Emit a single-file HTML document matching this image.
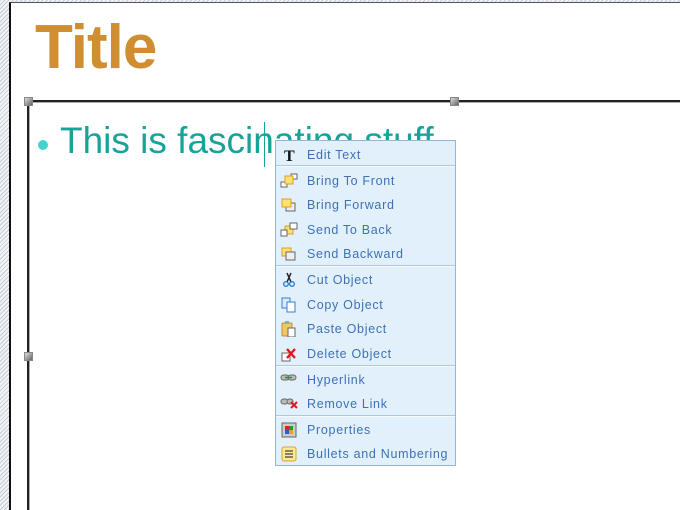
<!DOCTYPE html>
<html><head><meta charset="utf-8"><style>
*{margin:0;padding:0;box-sizing:border-box}
html,body{width:680px;height:510px;overflow:hidden}
body{background:#fff;position:relative;font-family:"Liberation Sans",Arial,sans-serif}
.hatch{position:absolute;background:repeating-linear-gradient(135deg,#c4ccd6 0 1px,#f2f4f7 1px 3px)}
.page{position:absolute;left:9px;top:2px;width:671px;height:508px;background:#fff;border-left:2px solid #111;border-top:1px solid #555}
.title{position:absolute;left:35px;top:12px;font-size:62px;font-weight:bold;color:#d08e30;letter-spacing:-1px}
.box{position:absolute;left:27px;top:100px;width:653px;height:410px;border-top:2px solid #222;border-left:2px solid #222;box-shadow:inset 1px 1px 0 #aaa}
.h{position:absolute;width:9px;height:9px;background:linear-gradient(135deg,#ddd,#666);border:1px solid #888}
.bul{position:absolute;left:38px;top:140px;width:10px;height:10px;border-radius:50%;background:#45d3d0}
.txt{position:absolute;left:60px;top:120px;font-size:37px;color:#18a39a;white-space:nowrap}
.caret{position:absolute;left:264px;top:122px;width:1px;height:45px;background:#18a39a}
.menu{position:absolute;left:275px;top:140px;width:181px;height:326px;background:#e2f0fc;border:1px solid #96b6d4}
.it{position:absolute;left:31px;font-size:12.5px;color:#3d72b5;line-height:14px;letter-spacing:0.7px;white-space:nowrap}
.sep{position:absolute;left:0;width:179px;height:2px;background:#b0c8de;border-bottom:1px solid #f4faff}
.ic{position:absolute;left:4px;width:18px;height:16px}
</style></head><body>
<div class="hatch" style="left:0;top:0;width:9px;height:510px"></div>
<div class="hatch" style="left:0;top:0;width:680px;height:2px"></div>
<div class="page"></div>
<div class="title">Title</div>
<div class="box"></div>
<div class="h" style="left:24px;top:97px"></div>
<div class="h" style="left:450px;top:97px"></div>
<div class="h" style="left:24px;top:352px"></div>
<div class="bul"></div>
<div class="txt">This is fascinating stuff.</div>
<div class="caret"></div>
<div class="menu">
<div class="sep" style="top:24px"></div>
<div class="sep" style="top:124px"></div>
<div class="sep" style="top:224px"></div>
<div class="sep" style="top:274px"></div>
<div class="it" style="top:7px">Edit Text</div>
<div class="it" style="top:33px">Bring To Front</div>
<div class="it" style="top:57px">Bring Forward</div>
<div class="it" style="top:82px">Send To Back</div>
<div class="it" style="top:106px">Send Backward</div>
<div class="it" style="top:132px">Cut Object</div>
<div class="it" style="top:157px">Copy Object</div>
<div class="it" style="top:181px">Paste Object</div>
<div class="it" style="top:206px">Delete Object</div>
<div class="it" style="top:232px">Hyperlink</div>
<div class="it" style="top:256px">Remove Link</div>
<div class="it" style="top:282px">Properties</div>
<div class="it" style="top:306px">Bullets and Numbering</div>
<svg class="ic" style="top:6px" viewBox="0 0 18 16"><text x="4" y="14" font-family="Liberation Serif" font-weight="bold" font-size="16" fill="#111">T</text></svg>
<svg class="ic" style="top:32px" viewBox="0 0 18 16"><rect x="11" y="1" width="6" height="5" fill="#fff" stroke="#666"/><rect x="1" y="9" width="6" height="5" fill="#fff" stroke="#666"/><rect x="5" y="3" width="8" height="8" fill="#fce070" stroke="#e0a020"/></svg>
<svg class="ic" style="top:56px" viewBox="0 0 18 16"><rect x="6" y="6" width="9" height="8" fill="#eee" stroke="#666"/><rect x="2" y="2" width="9" height="8" fill="#fce070" stroke="#e0a020"/></svg>
<svg class="ic" style="top:81px" viewBox="0 0 18 16"><rect x="5" y="4" width="8" height="8" fill="#fce070" stroke="#e0a020"/><rect x="10" y="1" width="7" height="6" fill="#fff" stroke="#666"/><rect x="1" y="8" width="6" height="6" fill="#fff" stroke="#666"/></svg>
<svg class="ic" style="top:105px" viewBox="0 0 18 16"><rect x="2" y="2" width="9" height="8" fill="#fce070" stroke="#e0a020"/><rect x="6" y="6" width="9" height="8" fill="#eee" stroke="#666"/></svg>
<svg class="ic" style="top:131px" viewBox="0 0 18 16"><path d="M7 1 L11 10 M11 1 L7 10" stroke="#222" stroke-width="1.5"/><circle cx="6" cy="12" r="2.3" fill="none" stroke="#2a7fd0" stroke-width="1.4"/><circle cx="12" cy="12" r="2.3" fill="none" stroke="#2a7fd0" stroke-width="1.4"/></svg>
<svg class="ic" style="top:156px" viewBox="0 0 18 16"><rect x="2" y="1" width="8" height="10" fill="#dbeafb" stroke="#3a7fcf"/><rect x="7" y="5" width="8" height="10" fill="#fff" stroke="#3a7fcf"/></svg>
<svg class="ic" style="top:180px" viewBox="0 0 18 16"><rect x="2" y="2" width="10" height="13" rx="1" fill="#f0c860" stroke="#c09030"/><rect x="5" y="0" width="4" height="3" fill="#8ab" /><rect x="8" y="7" width="7" height="9" fill="#fff" stroke="#666"/></svg>
<svg class="ic" style="top:205px" viewBox="0 0 18 16"><rect x="2" y="7" width="8" height="8" fill="#fff" stroke="#666"/><path d="M7 3 L15 12 M15 3 L7 12" stroke="#e01818" stroke-width="2.4"/></svg>
<svg class="ic" style="top:231px" viewBox="0 0 18 16"><rect x="1" y="3" width="8" height="5" rx="2.5" fill="#bbb" stroke="#666"/><rect x="8" y="3" width="8" height="5" rx="2.5" fill="#bbb" stroke="#666"/><line x1="5" y1="5.5" x2="12" y2="5.5" stroke="#2a8a3a" stroke-width="1.5"/></svg>
<svg class="ic" style="top:255px" viewBox="0 0 18 16"><rect x="1" y="3" width="7" height="5" rx="2.5" fill="#bbb" stroke="#666"/><rect x="7" y="3" width="6" height="5" rx="2.5" fill="#bbb" stroke="#666"/><path d="M11 6 L17 12 M17 6 L11 12" stroke="#e01818" stroke-width="2"/></svg>
<svg class="ic" style="top:281px" viewBox="0 0 18 16"><rect x="2" y="1" width="14" height="14" fill="#ccc" stroke="#666"/><rect x="5" y="4" width="4" height="4" fill="#e02020"/><rect x="9" y="4" width="4" height="4" fill="#20a020"/><rect x="5" y="8" width="4" height="4" fill="#2060e0"/><rect x="9" y="8" width="4" height="4" fill="#f0a020"/></svg>
<svg class="ic" style="top:305px" viewBox="0 0 18 16"><rect x="2" y="1" width="14" height="14" rx="2" fill="#fde88a" stroke="#e0a030"/><path d="M5 5h8M5 8h8M5 11h8" stroke="#444" stroke-width="1.3"/></svg>
</div>
</body></html>
